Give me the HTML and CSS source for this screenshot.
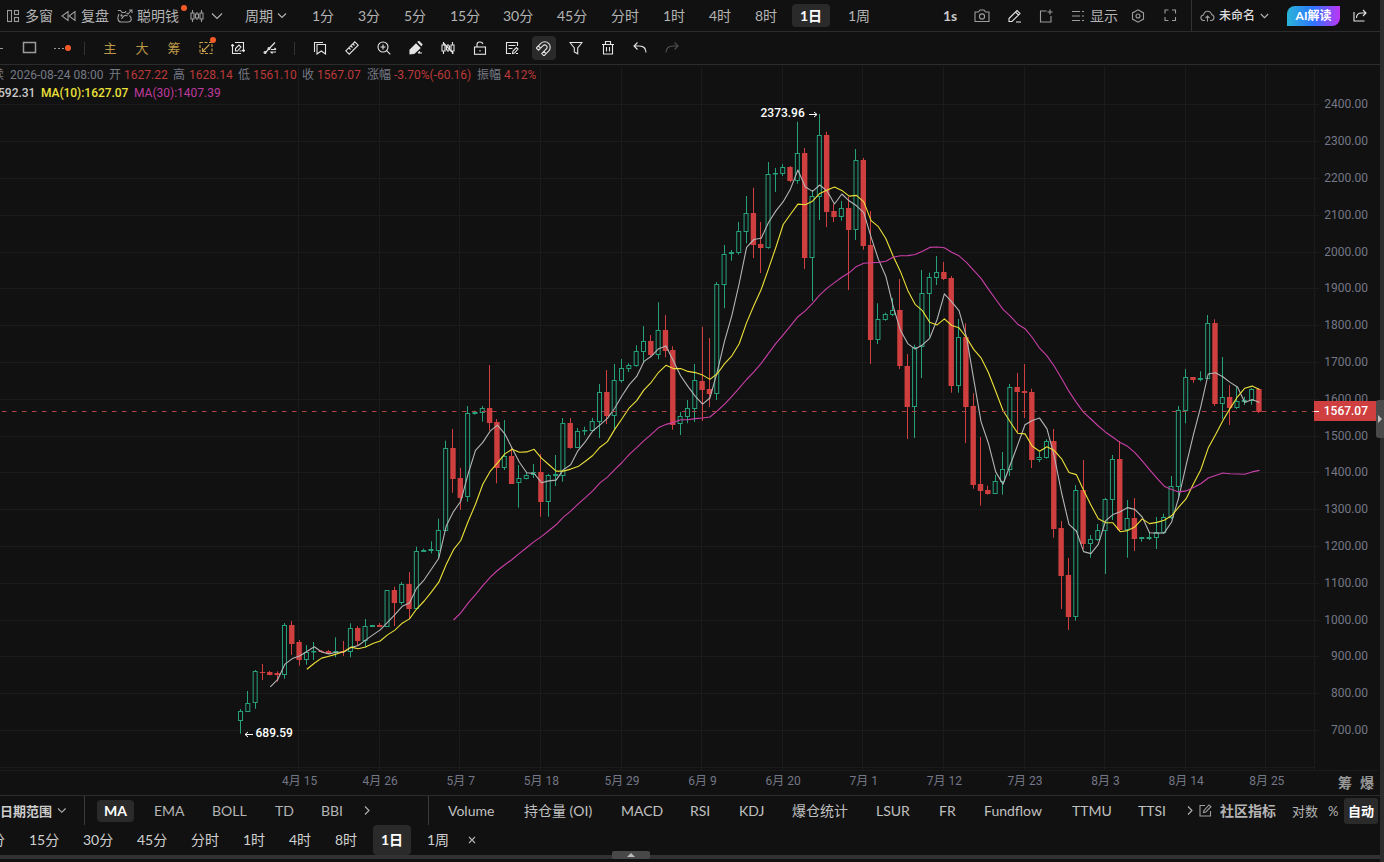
FILE: index.html
```html
<!DOCTYPE html>
<html lang="zh-CN">
<head>
<meta charset="utf-8">
<title>K线</title>
<link rel="stylesheet" href="styles.css">
</head>
<body>
<div class="app">
<div class="main">
  <header class="topbar">
    <div class="top-grid">
      <svg class="i dim" width="13" height="14" viewBox="0 0 13 14"><rect x=".5" y="1.500" width="4" height="11"/><rect x="7.500" y="1.500" width="4" height="4"/><rect x="7.500" y="8.500" width="4" height="4"/></svg>
      <span>多窗</span>
      <svg class="i dim" width="16" height="12" viewBox="0 0 16 12"><path d="M7 1.500v9L1 6zM14 1.500v9L8 6z"/></svg>
      <span>复盘</span>
      <svg class="i dim" width="16" height="14" viewBox="0 0 16 14"><path d="M2 5C0 9 1 13 4 13h7c4 0 4-4 1.500-6.500M.8 1.500h2.700l1.500 2h3l1-1.500M4.500 10c1.500-3 4-4.500 6-3M9.500 4l1.500 1 3.500-4M12 1h3v3"/><circle cx="4.500" cy="6.500" r=".6"/></svg>
      <span class="smart">聪明钱<b class="dot"></b></span>
      <svg class="i dim" width="14" height="14" viewBox="0 0 14 14"><path d="M2.500 1v12M7 3v8M11.500 1v12"/><path class="bgfill" d="M1 4h3v6H1zM5.500 5h3v4h-3zM10 4h3v6h-3z"/></svg>
      <svg class="i" width="12" height="8" viewBox="0 0 12 8"><path d="M1 1.500l5 5 5-5"/></svg>
      <span>周期</span>
      <svg class="i" width="10" height="7" viewBox="0 0 10 7"><path d="M1 1.500l4 4 4-4"/></svg>
      <span>1分</span><span>3分</span><span>5分</span><span>15分</span><span>30分</span><span>45分</span><span>分时</span><span>1时</span><span>4时</span><span>8时</span><span class="pill day">1日</span><span>1周</span>
      <span class="sec">1s</span>
      <svg class="i dim" width="16" height="14" viewBox="0 0 16 14"><path d="M1 3h3.500L6 1h4l1.500 2H15v9.500H1z"/><circle cx="8" cy="7.500" r="2.600"/></svg>
      <svg class="i hi" width="14" height="14" viewBox="0 0 14 14"><path d="M1 9.500L9 1.500l3 3-8 8H1zM7.500 3l3 3M8 13h5"/></svg>
      <svg class="i dim" width="15" height="14" viewBox="0 0 15 14"><path d="M7.500 2H1.500v11h10.500V7M11 .5v5M8.500 3h5"/></svg>
      <svg class="i dim" width="13" height="12" viewBox="0 0 13 12"><path d="M0 1.500h8M0 6h8M0 10.500h8M10 1.500h2M10 6h2M10 10.500h2"/></svg>
      <span>显示</span>
      <svg class="i dim" width="14" height="14" viewBox="0 0 14 14"><path d="M7 .8l5.500 3.100v6.200L7 13.200l-5.500-3.100V3.900z"/><circle cx="7" cy="7" r="2"/></svg>
      <svg class="i dim" width="13" height="13" viewBox="0 0 13 13"><path d="M1 4.500V1h3.500M8 1h3.500v3.500M11.500 8v3.500H8M4.500 11.500H1V8"/></svg>
    </div>
    <div class="account">
      <svg class="i dim" width="15" height="12" viewBox="0 0 15 12"><path d="M5 10.500H3.500C0 10 0 5.500 3.500 5 4.500 0 10.500 0 11.500 4.500c3.500 1 3 5.500 0 6H10M7.500 11.500V6M5.500 8l2-2 2 2"/></svg>
      <span class="name">未命名</span>
      <svg class="i" width="9" height="6" viewBox="0 0 9 6"><path d="M.8 1l3.700 3.700L8.200 1"/></svg>
      <span class="ai">AI解读</span>
      <svg class="i hi" width="14" height="13" viewBox="0 0 14 13"><path d="M1 3v9h10.500M3.500 9c0-3.500 2-5 5-5H13M10 1l3 3-3 3"/></svg>
    </div>
  </header>

  <nav class="tools">
    <span class="stub"></span>
    <span class="t"><svg class="i dim" width="16" height="14" viewBox="0 0 16 14"><rect x="1.500" y="1.500" width="12" height="10" stroke-width="1.500"/></svg></span>
    <span class="t more"><i></i><i></i><i></i><b class="dot"></b></span>
    <span class="sep"></span>
    <span class="t gold">主</span><span class="t gold">大</span><span class="t gold">筹</span>
    <span class="t gold flag"><svg class="i" width="14" height="14" viewBox="0 0 14 14"><rect x="1" y="1.500" width="12" height="11" stroke-dasharray="3 1.500"/><path d="M3.500 10.500l7-7M3.500 7v3.500H7"/></svg><b class="dot"></b></span>
    <span class="t"><svg class="i hi" width="14" height="14" viewBox="0 0 14 14"><path d="M4 1.500h8.500v8M10 12.500H1.500V4M4.500 10V7.500l3.500-3.500 2 2L6.500 10zM0 5l1.500-1.500L3 5M11 9l1.500 1.500L14 9M8.500 10h2"/></svg></span>
    <span class="t"><svg class="i hi" width="14" height="14" viewBox="0 0 14 14"><path d="M2 12L12 1.500M8 8.500h5M11.500 7L13 8.500M13 11H8l1.500 1.500"/><circle cx="2" cy="11.500" r="1"/><circle cx="6" cy="7.500" r="1"/></svg></span>
    <span class="sep wide"></span>
    <span class="t"><svg class="i hi" width="14" height="14" viewBox="0 0 14 14"><path d="M4 3.500h8.500v9.500l-4.200-3L4 13zM1.500 11V1.500h8.500"/></svg></span>
    <span class="t"><svg class="i hi" width="14" height="14" viewBox="0 0 14 14"><path d="M.8 9.800l9-9 3.400 3.400-9 9zM4 7l1.500 1.500M6 5l1.500 1.500M8 3l1.500 1.500"/></svg></span>
    <span class="t"><svg class="i hi" width="14" height="14" viewBox="0 0 14 14"><circle cx="6" cy="6" r="5"/><path d="M9.700 9.700L13.300 13.300M3.500 6h5M6 3.500v5"/></svg></span>
    <span class="t"><svg class="i hi" width="14" height="14" viewBox="0 0 14 14"><path class="solid" d="M1 13v-4L7 3l4 4L5 12.500zM9 1l1-.5 3 3-.8 1z"/><path d="M9 12h4M9 12l2-1.500"/></svg></span>
    <span class="t"><svg class="i hi" width="14" height="14" viewBox="0 0 14 14"><path d="M2.500 1v12M7 3v8M11.500 1v12"/><path class="bgfill" d="M1 4h3v6H1zM5.500 5h3v4h-3zM10 4h3v6h-3z"/><path d="M2 1.500l10.500 11"/></svg></span>
    <span class="t"><svg class="i hi" width="14" height="14" viewBox="0 0 14 14"><rect x="1.500" y="6" width="11" height="7.300"/><path d="M4 6V3.500C4 .5 9 .2 10 3M7 9v1.500"/></svg></span>
    <span class="t"><svg class="i hi" width="14" height="14" viewBox="0 0 14 14"><path d="M12.500 5V1.500h-11v11H6M3.500 4.500h7M3.500 7.500h4M7.500 12.500l.5-2.500 3.500-3.500 1.500 1.500-3.500 4zM11 12.500h2"/></svg></span>
    <span class="t"><b class="tool-active"><svg class="i hi" width="16" height="16" viewBox="0 0 16 16"><g transform="rotate(45 8 8)"><path d="M2.500 13.500V7a5.500 5.500 0 0 1 11 0v6.500h-3.200V7a2.300 2.300 0 0 0-4.600 0v6.500zM2.500 10.500h3.200M10.300 10.500h3.200"/></g></svg></b></span>
    <span class="t"><svg class="i hi" width="14" height="14" viewBox="0 0 14 14"><path d="M1 1.500h12L8.700 7v5.800L5.300 11V7z"/></svg></span>
    <span class="t"><svg class="i hi" width="14" height="14" viewBox="0 0 14 14"><path d="M1 3.500h12M4.500 3.500v-3h5v3M2.500 3.500v9.500h9V3.500M5.500 6v4.500M8.500 6v4.500"/></svg></span>
    <span class="t"><svg class="i hi" width="14" height="14" viewBox="0 0 14 14"><path d="M4.500 1.500L1 5l3.500 3.500M1 5h5.500c4 0 6.500 2.500 6.500 6.500"/></svg></span>
    <span class="t"><svg class="i faint" width="14" height="14" viewBox="0 0 14 14"><path d="M9.500 1.500L13 5 9.500 8.500M13 5H7.500C3.500 5 1 7.500 1 11.500"/></svg></span>
  </nav>

  <section class="stage">
    <svg id="chart" class="chart" width="1380" height="730" viewBox="0 65 1380 730"></svg>
    <div class="legend">
      <div class="ohlc"><span class="cut">续</span><span>2026-08-24 08:00</span><span>开</span><em>1627.22</em><span>高</span><em>1628.14</em><span>低</span><em>1561.10</em><span>收</span><em>1567.07</em><span>涨幅</span><em>-3.70%(-60.16)</em><span>振幅</span><em>4.12%</em></div>
      <div class="mas"><span class="ma5">592.31</span><span class="ma10">MA(10):1627.07</span><span class="ma30">MA(30):1407.39</span></div>
    </div>
    <div class="corner"><span>筹</span><span>爆</span></div>
  </section>

  <nav class="indicators">
    <span class="range">日期范围</span>
    <svg class="i" width="10" height="7" viewBox="0 0 10 7"><path d="M1 1.500l3.800 3.800 3.800-3.800"/></svg>
    <span class="rule"></span>
    <span class="pill ma">MA</span><span>EMA</span><span>BOLL</span><span>TD</span><span>BBI</span>
    <svg class="i" width="6" height="9" viewBox="0 0 6 9"><path d="M1 .5l4 4-4 4"/></svg>
    <span class="rule"></span>
    <span class="b">Volume</span><span class="b">持仓量 (OI)</span><span class="b">MACD</span><span class="b">RSI</span><span class="b">KDJ</span><span class="b">爆仓统计</span><span class="b">LSUR</span><span class="b">FR</span><span class="b">Fundflow</span><span class="b">TTMU</span><span class="b">TTSI</span>
    <svg class="i" width="6" height="9" viewBox="0 0 6 9"><path d="M1 .5l4 4-4 4"/></svg>
    <svg class="i dim" width="13" height="13" viewBox="0 0 13 13"><path d="M6 1.500H1v10.500h10.500V7M4.500 8.500l.5-2 5-5.500 2 1.700-5.200 5.300z"/></svg>
    <span class="community">社区指标</span><span class="small">对数</span><span class="small">%</span><span class="pill auto">自动</span>
  </nav>

  <nav class="periods">
    <span>分</span><span>15分</span><span>30分</span><span>45分</span><span>分时</span><span>1时</span><span>4时</span><span>8时</span><span class="pill day">1日</span><span>1周</span>
    <svg class="i" width="8" height="8" viewBox="0 0 8 8"><path d="M1 1l6 6M7 1L1 7"/></svg>
  </nav>
  <div class="splitter"><b class="grip"></b></div>
</div>
<aside class="side"><b class="side-grip"></b></aside>
</div>
<script src="chart.js"></script>
</body>
</html>
```

FILE: styles.css
```css
* { box-sizing: border-box; }
body { margin: 0; background: #111; overflow: hidden; font: 14px/20px Lato, "Noto Sans CJK SC", sans-serif; color: #b4b4b4; }
span { white-space: nowrap; }
.app { display: flex; width: 1384px; height: 862px; }
.main { width: 1380px; display: flex; flex-direction: column; overflow: hidden; }
.side { width: 4px; background: #2c2c2c; position: relative; }
.side-grip { position: absolute; left: -4px; top: 400px; width: 8px; height: 38px; background: #4a4a4a; border-radius: 3px 0 0 3px; }
.side-grip::after { content: ""; position: absolute; left: 2px; top: 15px; border: 4px solid transparent; border-left: 4px solid #bbb; border-right: 0; }

.i { fill: none; stroke: #b4b4b4; stroke-width: 1.1; display: block; flex: none; }
.dim { stroke: #9c9c9c; }
.hi { stroke: #e4e4e4; }
.faint { stroke: #505050; }
.solid { fill: #e4e4e4; }
.bgfill { fill: #111; }
.dot { position: absolute; width: 6px; height: 6px; border-radius: 50%; background: #f45a28; }
.pill { background: #2a2a2a; border-radius: 4px; color: #fff; font-weight: 700; display: flex; align-items: center; justify-content: center; }

.topbar { height: 32px; border-bottom: 1px solid #2c2c2c; display: flex; flex: none; }
.top-grid { width: 1191px; height: 31px; padding-left: 7px; display: grid; align-items: center;
  grid-template-columns: 18px 36px 20px 36px 20px 53px 21px 34px 32px 35px 46px 46px 46px 53px 54px 54px 52px 46px 46px 37px 56px 95px 31px 34px 31px 33px 18px 41px 33px 20px; }
.smart { position: relative; }
.smart .dot { left: 44px; top: -1px; }
.day { width: 38px; height: 23px; }
.sec { font-weight: 700; color: #c8c8c8; }
.account { border-left: 1px solid #333; width: 189px; padding-left: 8px; display: grid; align-items: center; grid-template-columns: 19px 41px 27px 66px 20px; }
.name { font-size: 12px; font-weight: 500; color: #ddd; }
.ai { width: 53px; height: 20px; border-radius: 8px 0 8px 0; background: linear-gradient(90deg, #2ab5d8, #2f74ff 50%, #be35f5); color: #fff; font-size: 12px; font-weight: 700; line-height: 20px; text-align: center; }

.tools { height: 33px; border-bottom: 1px solid #2c2c2c; display: flex; align-items: center; flex: none; }
.stub { width: 14px; flex: none; }
.stub::before { content: ""; display: block; width: 3px; height: 1px; background: #999; }
.t { width: 32px; flex: none; display: flex; align-items: center; justify-content: center; position: relative; }
.gold { color: #bb9748; font-size: 13px; }
.gold .i { stroke: #c9a04c; }
.flag .dot { right: 6px; top: -4px; }
.more { gap: 2px; padding-right: 6px; }
.more i { width: 2px; height: 1px; background: #999; }
.more .dot { left: 19px; top: -3px; }
.sep { width: 16px; height: 13px; flex: none; display: flex; }
.sep::before { content: ""; width: 1px; margin-left: 6px; background: #333; }
.sep.wide { width: 18px; }
.sep.wide::before { margin-left: 8px; }
.tool-active { width: 24px; height: 24px; background: #2a2a2a; border-radius: 4px; display: flex; align-items: center; justify-content: center; }

.stage { height: 730px; flex: none; position: relative; }
.chart { display: block; font: 12px Roboto, "Noto Sans CJK SC", sans-serif; fill: #747786; }
.grid { stroke: #1b1b1e; stroke-width: 1; }
.up { fill: none; stroke: #27a17c; }
.down { fill: #cf3f3f; }
.wick-up { stroke: #27a17c; }
.wick-down { stroke: #cf3f3f; }
.line { fill: none; stroke-width: 1.1; stroke-linejoin: round; }
.l5 { stroke: #b5b5b8; }
.l10 { stroke: #ece039; }
.l30 { stroke: #c93fa8; }
.last { stroke: #b04545; stroke-dasharray: 4.5 5.5; }
.note { fill: #fff; font-weight: 500; }
.arrow { fill: none; stroke: #fff; }
.legend { position: absolute; left: 0; top: 1px; font: 12px/18px Roboto, "Noto Sans CJK SC", sans-serif; color: #757986; }
.legend em { font-style: normal; color: #bd3a3a; }
.ohlc { display: grid; padding-left: 10px; grid-template-columns: 0 99px 15px 49px 16px 49px 15px 49px 15px 50px 27px 83px 27px 40px; }
.cut { margin-left: -18px; }
.mas { display: flex; }
.ma5 { margin-left: -2px; width: 43px; color: #c9c9c9; font-weight: 500; }
.ma10 { width: 93px; color: #ece039; font-weight: 500; letter-spacing: -.05px; }
.ma30 { color: #bf3a9d; }
.corner { position: absolute; left: 1338px; top: 708px; display: flex; gap: 8px; font-weight: 700; color: #999; }

.indicators { height: 30px; border-top: 1px solid #2c2c2c; display: grid; align-items: center; flex: none;
  grid-template-columns: 57px 27px 13px 57px 58px 63px 46px 43px 64px 20px 76px 97px 69px 49px 53px 84px 63px 45px 88px 66px 49px 12px 21px 72px 36px 16px 36px; }
.range { font-size: 13px; font-weight: 700; color: #ccc; }
.rule { width: 1px; height: 29px; background: #3a3a3a; }
.ma { width: 37px; height: 22px; }
.b { color: #c0c0c0; }
.community { font-weight: 700; }
.small { font-size: 13px; }
.auto { width: 34px; height: 26px; font-size: 13px; border-radius: 3px; }
.periods { height: 30px; display: grid; align-items: center; flex: none; color: #d0d0d0;
  grid-template-columns: 38px 54px 54px 54px 52px 46px 46px 38px 54px 41px 10px; margin-left: -9px; }
.periods .day { height: 30px; }
.splitter { height: 4px; flex: none; background: #323232; position: relative; }
.grip { position: absolute; left: 612px; top: -4px; width: 38px; height: 8px; background: #484848; border-radius: 2px; }
.grip::after { content: ""; position: absolute; left: 15px; top: 2px; border: 4px solid transparent; border-bottom-color: #bbb; border-top: 0; }
```

FILE: chart.js
```js
// One row per day from 4/7: direction, then high, body top, body bottom and low on the plot's vertical scale.
const rows = `u 709 711 720.7 733.7|u 691 703 711.7 711.7|u 670 671.3 703.3 708.7|d 664 671.5 672.7 680|d 671 672 674.7 675.3|d 671.3 673 674.7 681.7|u 623 625 674.7 678.7|d 621 625 643.7 655|d 640 642 660 665.7|u 645 652 660 664.7
u 642 651 652.3 660|d 650 650.7 651.5 652|d 650 651 653 653.7|u 637.3 651.3 653 657.3|d 641 651 652 656|u 623.3 628 651.7 657.3|d 626 628 641 646|u 619 626 641 647.3|u 625 625.3 627 627|d 623 625 627 627
u 590 590 626.7 626.7|d 586.7 590 603 626|u 582 584 603 604.7|d 572 584 608.7 618.7|u 546.7 551.3 608.7 610|u 548.7 550 552 552|u 541.3 549 550.7 553.3|u 518.7 530 550.7 558.5|u 440.7 448 531 531|d 429 448 479 492.7
d 467.7 478 498 510|u 406 413 496.7 501.7|u 410.7 412 414 414.7|u 406 408 412.7 421.7|d 365 408 423 430.7|d 419 422 468 483.3|u 420 456 468 470|d 446.7 456 484 484|u 465 478 482.7 507.7|u 472 475.3 478.7 479.3
u 464 472 475.3 478|d 454 472 502 516.7|u 474 475 501.7 516.7|u 455 474 475.7 486|u 418 423 475.7 481.7|d 418 423 448 448.7|u 428 431 448 448|u 426.7 430 431.3 435.3|u 418 421 431 431|u 384 392 422 438
d 370 392 416 424|u 364 380 415.7 430|u 359 368 381 382.7|u 363.3 365 369 372|u 345.3 351 365.7 366.7|u 326 341 351.7 363|d 335 341 354.7 357.3|u 302.3 330 354.7 359.3|d 315 330 351 357.3|d 346.3 350 425 429.7
u 412 416 423.7 435|u 400 408 416.7 423.3|u 364 380 408.7 422|d 326.7 381 390 421|d 338 389 394 407|u 282 284 394 400|u 245 254 284.5 308.3|u 250 252.3 254.3 260.7|u 222 231 252.7 254.7|u 196 213 232 243.3
d 187.7 213 245 258|d 222 244 247.7 273|u 162 174 247.7 248.7|u 168 173 174.3 192|u 164 167 173.7 176|d 166 167 181 182.3|u 121.7 153 180.7 183.7|d 148 153 258 269|u 190 196 257.7 301|u 114 135 196.7 220
d 131.7 135 212 227|d 204 211 217 222|u 201 208 216.7 220.7|d 196.7 208 230 290|u 149 160 229.7 240|d 158 160 246 249.7|d 211 245 340 364|u 303.3 319 340 344|u 312.7 314 320 320.7|u 298 310 314.7 316
d 279 310 366 369|d 354 366 407 439|u 344.7 346.7 406.7 438|u 270 293 346.7 378|u 272.7 277 293.7 336.7|u 256 272 278 285|d 262 272 279 280|d 276 278 386 392.7|u 319 337 385.7 392.7|d 323.3 337 407 443
d 393.3 406 485 488.7|d 437 484 491 505.7|d 485.7 490 494 494.7|u 474.7 480.7 494 494|u 452 469 482 494.7|u 384 387 470 476|d 373 387 392 432|d 364 391 392.7 418|d 388.7 392 460 468|u 452 457 460 462
u 439.3 441 458 458.7|d 429 441 529 537.7|d 521 528 576 609|d 558 575 617 630|u 485 490 616.7 620.7|d 460 490 544 549|u 535 539 544 557.7|u 524 530 540 540.7|u 498 499 531 574|u 455 459 500 520
d 441 459 530 531|u 500 518 530 557.7|d 498 518 539 551|u 537 537 539 541.7|u 532 537.3 539 540|u 517 532 538 549|u 513.7 517 533.3 534|u 476 486 518 519|u 406 410 486.7 500|u 369 377 411 423.3
d 377 377 380 382.7|u 371.3 378 380 381.3|u 315 323 379 379|d 319.3 323 404 406|u 357 397 404 419|d 385 397 408 425|u 387 401 408 409|u 396.7 400 401.7 405|u 388 389.3 401.3 404.7|d 388 389 412 413`
  .split(/[|\n]/).map(r => { const [dir, ...v] = r.trim().split(' '); return [dir, ...v.map(Number)]; });

const X0 = 240.5, STEP = 7.327;
const out = [];
const line = (x1, y1, x2, y2, cls) => out.push(`<line x1="${x1}" y1="${y1}" x2="${x2}" y2="${y2}" class="${cls}"/>`);

// Grid and axes
for (let k = 0; k < 18; k++) {
  const y = Math.round(104.4 + k * 36.8);
  line(0, y + .5, 1319, y + .5, 'grid');
  out.push(`<text x="1368" y="${y + 4}" text-anchor="end">${2400 - k * 100}.00</text>`);
}
['4月 15', '4月 26', '5月 7', '5月 18', '5月 29', '6月 9', '6月 20', '7月 1', '7月 12', '7月 23', '8月 3', '8月 14', '8月 25'].forEach((d, k) => {
  const x = X0 + STEP * (8 + 11 * k);
  line(Math.floor(x - .4) + .5, 66, Math.floor(x - .4) + .5, 770, 'grid');
  out.push(`<text x="${x + .5}" y="785" text-anchor="middle">${d}</text>`);
});
line(0, 767.5, 1314, 767.5, 'grid');
line(0, 770.5, 1378, 770.5, 'grid');
line(1314.5, 66, 1314.5, 770, 'grid');

// Candles: rising days are hollow, falling days are solid
rows.forEach(([dir, hi, top, bot, lo], i) => {
  const x = X0 + STEP * i, w = Math.floor(x) + .5;
  const t = Math.round(top), b = Math.max(Math.round(bot), t + 1);
  if (dir === 'u') {
    line(w, hi, w, t, 'wick-up');
    line(w, b, w, lo, 'wick-up');
    out.push(`<rect x="${x - 2}" y="${t + .5}" width="4" height="${Math.max(b - t - 1, .5)}" class="up"/>`);
  } else {
    line(w, hi, w, lo, 'wick-down');
    out.push(`<rect x="${x - 2.7}" y="${t}" width="5.400" height="${b - t}" class="down"/>`);
  }
});

// Moving averages of the closing level
const close = rows.map(r => r[0] === 'u' ? r[2] : r[3]);
[[5, 'l5'], [10, 'l10'], [30, 'l30']].forEach(([n, cls]) => {
  const pts = [];
  for (let i = n - 1; i < close.length; i++) {
    const avg = close.slice(i - n + 1, i + 1).reduce((a, c) => a + c, 0) / n + .4;
    pts.push((X0 + STEP * i + .5).toFixed(1) + ',' + avg.toFixed(1));
  }
  out.push(`<polyline class="line ${cls}" points="${pts.join(' ')}"/>`);
});

// Last price and extreme labels
line(2, 411.5, 1314, 411.5, 'last');
out.push('<rect x="1314" y="401" width="63" height="20" fill="#cf3f3f"/><path d="M1314 411.500h5" stroke="#fff"/><text class="note" x="1368" y="415.300" text-anchor="end">1567.07</text>');
out.push('<text class="note" x="760.500" y="117">2373.96</text><path class="arrow" d="M809 114.500h8M814 112l3 2.500-3 2.500"/>');
out.push('<text class="note" x="255.500" y="737">689.59</text><path class="arrow" d="M253 734.500h-8M248 732l-3 2.500 3 2.500"/>');
document.getElementById('chart').innerHTML = out.join('');
```
